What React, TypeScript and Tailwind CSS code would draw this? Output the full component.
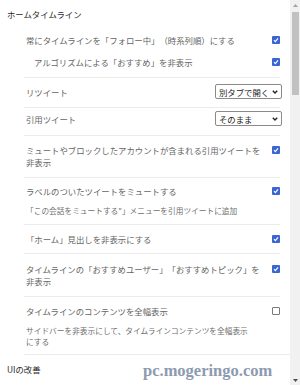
import React from 'react';

type Check = 'on' | 'off';

function Box({ state }: { state: Check }) {
  if (state === 'off') {
    return <span className="block w-[8px] h-[8px] mt-[2px] rounded-[1px] border border-[#7a7a7a] bg-white" />;
  }
  return (
    <span className="flex items-center justify-center w-[8px] h-[8px] mt-[2px] rounded-[1px] bg-[#3a66d4]">
      <svg width="6" height="6" viewBox="0 0 6 6">
        <path d="M1 3.2 L2.4 4.6 L5 1.4" fill="none" stroke="white" strokeWidth="1.2" />
      </svg>
    </span>
  );
}

function Select({ value }: { value: string }) {
  return (
    <div className="flex items-center justify-between w-[67px] h-[15px] mr-[-2px] border border-[#8a8a8a] rounded-[2px] pl-[3px] pr-[3px] text-[8.4px] leading-[12px] text-[#222]">
      <span>{value}</span>
      <svg width="6" height="4" viewBox="0 0 6 4">
        <path d="M0.8 0.8 L3 3 L5.2 0.8" fill="none" stroke="#222" strokeWidth="1.4" />
      </svg>
    </div>
  );
}

export default function App() {
  const label = 'text-[8.4px] leading-[12px] text-[#646464]';
  const sub = 'text-[7.7px] leading-[11px] text-[#6e6e6e] max-w-[228px]';
  const sep = 'border-t border-[#ebebeb]';

  return (
    <div className="relative flex w-[300px] h-[385px] overflow-hidden bg-white font-['Noto_Sans_CJK_JP',sans-serif] [text-spacing-trim:space-all]">
      <div className="w-[290px] flex flex-col">
        <div className="pt-[8px] pl-[7px] text-[8.4px] leading-[12px] text-[#2a2a2a]">ホームタイムライン</div>

        <div className="ml-[24px] pr-[10px]">
          <div className="flex items-start justify-between pl-[2px] pt-[14px]">
            <span className={label}>常にタイムラインを「フォロー中」（時系列順）にする</span>
            <Box state="on" />
          </div>
          <div className="flex items-start justify-between pl-[10px] pt-[10px] pb-[9px]">
            <span className={label}>アルゴリズムによる「おすすめ」を非表示</span>
            <Box state="on" />
          </div>

          <div className={`${sep} flex items-center justify-between pl-[2px] pt-[6px] pb-[8px]`}>
            <span className={label}>リツイート</span>
            <Select value="別タブで開く" />
          </div>
          <div className={`${sep} flex items-center justify-between pl-[2px] pt-[3px] pb-[9px]`}>
            <span className={label}>引用ツイート</span>
            <Select value="そのまま" />
          </div>

          <div className={`${sep} flex items-start justify-between pl-[2px] pt-[8px] pb-[9px]`}>
            <span className={`${label} w-[236px]`}>ミュートやブロックしたアカウントが含まれる引用ツイートを非表示</span>
            <Box state="on" />
          </div>

          <div className={`${sep} pl-[2px] pt-[7px] pb-[8px]`}>
            <div className="flex items-start justify-between">
              <span className={label}>ラベルのついたツイートをミュートする</span>
              <Box state="on" />
            </div>
            <div className={`${sub} mt-[8px]`}>「この会話をミュートする"」メニューを引用ツイートに追加</div>
          </div>

          <div className={`${sep} flex items-start justify-between pl-[2px] pt-[8px] pb-[8px]`}>
            <span className={label}>「ホーム」見出しを非表示にする</span>
            <Box state="on" />
          </div>

          <div className={`${sep} flex items-start justify-between pl-[2px] pt-[9px] pb-[9px]`}>
            <span className={`${label} w-[236px]`}>タイムラインの「おすすめユーザー」「おすすめトピック」を非表示</span>
            <Box state="on" />
          </div>

          <div className={`${sep} pl-[2px] pt-[8px] pb-[7px]`}>
            <div className="flex items-start justify-between">
              <span className={label}>タイムラインのコンテンツを全幅表示</span>
              <Box state="off" />
            </div>
            <div className={`${sub} mt-[8px]`}>サイドバーを非表示にして、タイムラインコンテンツを全幅表示にする</div>
          </div>
        </div>

        <div className="ml-[24px] border-t border-[#ebebeb]" />
        <div className="pl-[7px] pt-[8px] text-[8.4px] leading-[12px] text-[#2a2a2a]">UIの改善</div>
      </div>

      <div className="w-[10px] h-full bg-[#f1f1f1] flex flex-col items-center">
        <div className="h-[10px] flex items-center justify-center">
          <svg width="5" height="3" viewBox="0 0 5 3">
            <path d="M0 3 L2.5 0 L5 3 Z" fill="#a3a3a3" />
          </svg>
        </div>
        <div className="w-[7px] h-[83px] mt-[2px] bg-[#c1c1c1]" />
        <div className="flex-1" />
        <div className="h-[10px] flex items-center justify-center">
          <svg width="5" height="3" viewBox="0 0 5 3">
            <path d="M0 0 L2.5 3 L5 0 Z" fill="#505050" />
          </svg>
        </div>
      </div>

      <div className="absolute left-[143px] top-[360px] font-['Liberation_Serif',serif] font-bold text-[16.5px] leading-[22px] text-[#8d9ab1]">
        pc.mogeringo.com
      </div>
    </div>
  );
}
